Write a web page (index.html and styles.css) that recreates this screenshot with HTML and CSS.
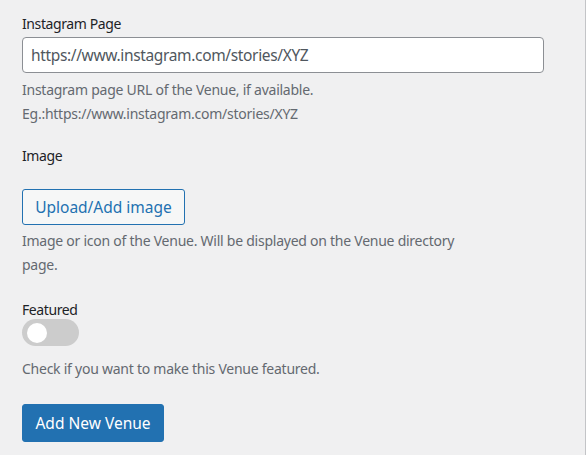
FILE: index.html
```html
<!DOCTYPE html>
<html lang="en">
<head>
<meta charset="utf-8">
<title>Add Venue</title>
<link rel="stylesheet" href="styles.css">
</head>
<body>
<div class="page">
  <form class="venue-form">
    <div class="field">
      <label class="field-label" for="instagram">Instagram Page</label>
      <input class="text-input" id="instagram" type="text" value="https://www.instagram.com/stories/XYZ">
      <p class="description">Instagram page URL of the Venue, if available.<br>Eg.:https://www.instagram.com/stories/XYZ</p>
    </div>
    <div class="field field-image">
      <span class="field-label">Image</span>
      <button type="button" class="btn-secondary">Upload/Add image</button>
      <p class="description desc-image">Image or icon of the Venue. Will be displayed on the Venue directory page.</p>
    </div>
    <div class="field field-featured">
      <span class="field-label">Featured</span>
      <span class="toggle"><span class="knob"></span></span>
      <p class="description desc-featured">Check if you want to make this Venue featured.</p>
    </div>
    <button type="submit" class="btn-primary">Add New Venue</button>
  </form>
</div>
</body>
</html>
```
FILE: styles.css
```css
html, body {
  margin: 0;
  padding: 0;
  background: #f0f0f1;
}
body {
  font-family: "Noto Sans", "Open Sans", sans-serif;
  font-size: 14px;
  color: #1d2327;
}
.page {
  width: 586px;
  height: 455px;
  box-sizing: border-box;
  border-right: 1px solid #c3c4c7;
  padding: 14px 0 0 22px;
}
.venue-form {
  display: flex;
  flex-direction: column;
  align-items: flex-start;
}
.field {
  display: flex;
  flex-direction: column;
  align-items: flex-start;
}
.field-label {
  display: block;
  line-height: 20px;
  font-size: 14px;
  letter-spacing: -0.4px;
  color: #1d2327;
}
.text-input {
  margin-top: 3px;
  width: 522px;
  height: 36px;
  box-sizing: border-box;
  border: 1px solid #8c8f94;
  border-radius: 4px;
  background: #fff;
  padding: 0 8px;
  font-family: inherit;
  font-size: 15.5px;
  letter-spacing: -0.35px;
  color: #50575e;
}
.description {
  margin: 5px 0 0;
  line-height: 24px;
  font-size: 14px;
  letter-spacing: -0.25px;
  color: #646970;
  max-width: 450px;
}
.field-image {
  margin-top: 20px;
}
.btn-secondary {
  margin-top: 23px;
  height: 36px;
  width: 163px;
  box-sizing: border-box;
  border: 1px solid #2271b1;
  border-radius: 3px;
  background: #f6f7f7;
  color: #2271b1;
  font-family: inherit;
  font-size: 15.5px;
  padding: 0;
  cursor: pointer;
}
.desc-image {
  margin-top: 4px;
}
.field-featured {
  margin-top: 23px;
}
.toggle {
  display: block;
  margin-top: -1px;
  width: 57px;
  height: 27px;
  border-radius: 14px;
  background: #cccccc;
  position: relative;
}
.knob {
  position: absolute;
  left: 5px;
  top: 4px;
  width: 20px;
  height: 20px;
  border-radius: 50%;
  background: #fff;
}
.desc-featured {
  margin-top: 11px;
}
.btn-primary {
  margin-top: 23px;
  width: 142px;
  height: 38px;
  border: 1px solid #2271b1;
  border-radius: 3px;
  background: #2271b1;
  color: #fff;
  font-family: inherit;
  font-size: 15.5px;
  padding: 0;
  cursor: pointer;
}
```
